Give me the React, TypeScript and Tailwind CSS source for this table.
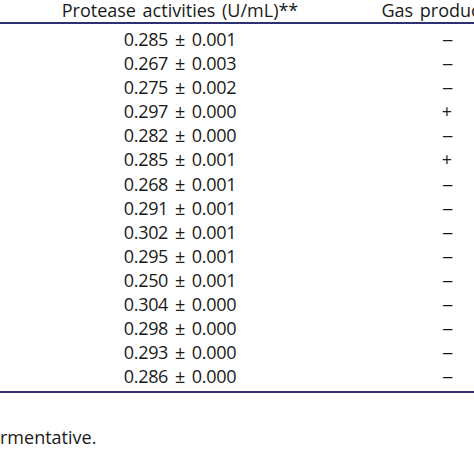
const rows: [string, string][] = [
  ["0.285 ± 0.001", "–"],
  ["0.267 ± 0.003", "–"],
  ["0.275 ± 0.002", "–"],
  ["0.297 ± 0.000", "+"],
  ["0.282 ± 0.000", "–"],
  ["0.285 ± 0.001", "+"],
  ["0.268 ± 0.001", "–"],
  ["0.291 ± 0.001", "–"],
  ["0.302 ± 0.001", "–"],
  ["0.295 ± 0.001", "–"],
  ["0.250 ± 0.001", "–"],
  ["0.304 ± 0.000", "–"],
  ["0.298 ± 0.000", "–"],
  ["0.293 ± 0.000", "–"],
  ["0.286 ± 0.000", "–"],
];

export default function App() {
  return (
    <div
      className="h-[474px] w-[474px] overflow-hidden bg-white text-[18px] text-[#1a1a1a]"
      style={{ fontFamily: '"Open Sans", "Noto Sans", sans-serif' }}
    >
      <div className="w-[534px]">
        {/* header, partly cut by the crop on the right */}
        <div className="grid h-[24px] grid-cols-[360px_174px] border-b-2 border-[#2e3070] leading-[20px] [word-spacing:2px]">
          <div className="text-center whitespace-nowrap">Protease activities (U/mL)**</div>
          <div className="text-center whitespace-nowrap">Gas production</div>
        </div>
        <div className="border-b-2 border-[#2e3070] py-[3px]">
          {rows.map(([value, gas], i) => (
            <div key={i} className="grid h-[24.1px] grid-cols-[360px_174px] leading-[24.1px]">
              <div className="text-center whitespace-nowrap tracking-[-0.3px] [word-spacing:2.5px]">{value}</div>
              <div className="text-center">
                <span className={gas === "–" ? "inline-block scale-x-125" : ""}>{gas}</span>
              </div>
            </div>
          ))}
        </div>
      </div>
      <p className="mt-[32px] leading-[24px]">rmentative.</p>
    </div>
  );
}
